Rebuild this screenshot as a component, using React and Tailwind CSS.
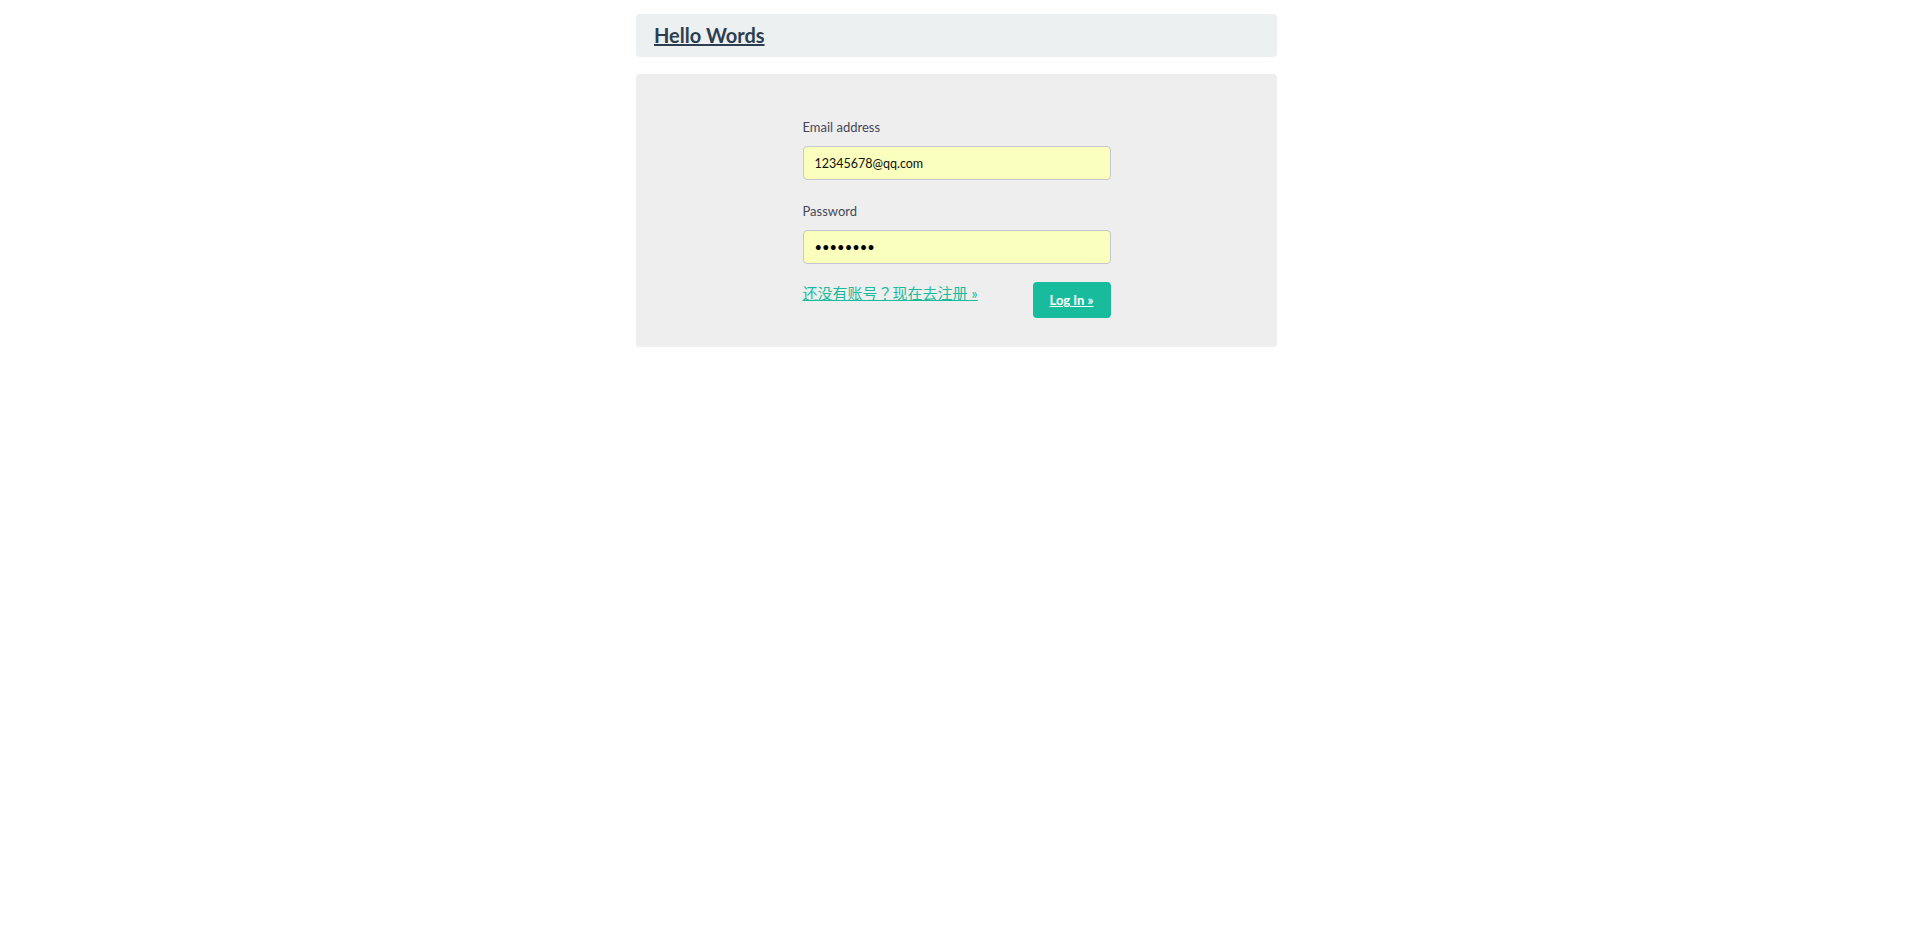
import React from "react";

export default function App() {
  return (
    <div
      className="min-h-screen bg-white"
      style={{ fontFamily: 'Lato, "Noto Sans CJK SC", sans-serif' }}
    >
      <div className="mx-auto w-[641px] pt-[14px]">
        <div className="flex h-[43px] items-start rounded-[4px] bg-[#ecf0f1] pl-[18px] pt-[7px]">
          <a
            href="#"
            className="text-[20px] font-bold leading-[28px] text-[#2c3e50] underline"
          >
            Hello Words
          </a>
        </div>

        <div className="mt-[17px] flex justify-center rounded-[4px] bg-[#eeeeee] pb-[29px] pt-[45px]">
          <form className="flex w-[308px] flex-col" onSubmit={(e) => e.preventDefault()}>
            <label className="mb-[10px] text-[13px] leading-[17px] text-[#454858]">
              Email address
            </label>
            <input
              type="email"
              defaultValue="12345678@qq.com"
              className="h-[34px] w-full rounded-[4px] border border-[#c4c8cc] bg-[#faffbd] px-[11px] text-[12.5px] text-[#111111] outline-none"
              style={{ fontFamily: 'Lato, "Noto Sans CJK SC", sans-serif' }}
            />
            <label className="mb-[10px] mt-[23px] text-[13px] leading-[17px] text-[#454858]">
              Password
            </label>
            <input
              type="password"
              defaultValue="12345678"
              className="h-[34px] w-full rounded-[4px] border border-[#c4c8cc] bg-[#faffbd] px-[11px] text-[13px] text-black outline-none"
              style={{ fontFamily: 'Lato, "Noto Sans CJK SC", sans-serif' }}
            />
            <div className="mt-[18px] flex items-start justify-between">
              <a
                href="#"
                className="mt-[1px] text-[15px] leading-[20px] text-[#18bc9c] underline"
                style={{ fontFamily: 'Lato, "Noto Sans CJK TC", "Noto Sans CJK SC", sans-serif' }}
              >
                还没有账号？现在去注册 »
              </a>
              <button
                type="submit"
                className="h-[36px] w-[78px] rounded-[4px] bg-[#18bc9c] text-[13px] font-bold leading-[36px] text-white underline"
              >
                Log In »
              </button>
            </div>
          </form>
        </div>
      </div>
    </div>
  );
}
